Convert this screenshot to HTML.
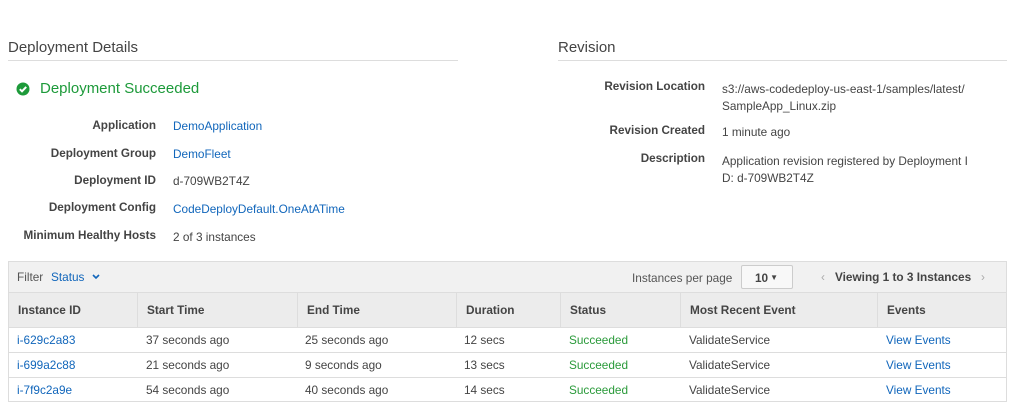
<!DOCTYPE html><html><head><style>
*{margin:0;padding:0;box-sizing:border-box}
body{width:1024px;height:419px;background:#fff;font-family:"Liberation Sans",sans-serif;color:#444;position:relative;overflow:hidden;font-size:11.8px}
.a{position:absolute;white-space:nowrap}
.h{font-size:15px;color:#444}
.lbl{font-weight:bold;text-align:right;color:#444;font-size:11.7px}
.v{font-size:11.8px;color:#444}
a,.lk{color:#1166bb;text-decoration:none}
.hr{position:absolute;height:1px;background:#ddd}
.tbl{position:absolute;left:8px;top:261px;width:999px;height:141px;border:1px solid #ddd;}
.fb{position:absolute;left:0;top:0;width:997px;height:31px;background:#f1f1f1;border-bottom:1px solid #ddd}
.th{position:absolute;top:31px;height:35px;background:#ececec;border-bottom:1px solid #ddd;border-right:1px solid #ddd;font-weight:bold;padding:10px 0 0 9px;color:#444}
.td{position:absolute;height:25px;border-bottom:1px solid #ddd;padding:5px 0 0 9px;color:#444}
.td .a{top:5px}
.g{color:#2a9a3a}
</style></head><body>
<div class="a h" style="left:8px;top:39px">Deployment Details</div>
<div class="hr" style="left:8px;top:60px;width:450px"></div>
<div class="a h" style="left:558px;top:39px">Revision</div>
<div class="hr" style="left:558px;top:60px;width:449px"></div>

<svg class="a" style="left:16px;top:82px" width="14" height="14" viewBox="0 0 14 14"><circle cx="7" cy="7" r="6.5" fill="#1d9a3a"/><path d="M3.8 7.2 6 9.3 10.2 4.9" stroke="#fff" stroke-width="2" fill="none"/></svg>
<div class="a" style="left:40px;top:80px;font-size:15px;color:#1d9a3a">Deployment Succeeded</div>

<div class="a lbl" style="right:868px;top:119px">Application</div><div class="a lk" style="left:173px;top:119px">DemoApplication</div>
<div class="a lbl" style="right:868px;top:147px">Deployment Group</div><div class="a lk" style="left:173px;top:147px">DemoFleet</div>
<div class="a lbl" style="right:868px;top:174px">Deployment ID</div><div class="a v" style="left:173px;top:174px">d-709WB2T4Z</div>
<div class="a lbl" style="right:868px;top:201px">Deployment Config</div><div class="a lk" style="left:173px;top:202px">CodeDeployDefault.OneAtATime</div>
<div class="a lbl" style="right:868px;top:229px">Minimum Healthy Hosts</div><div class="a v" style="left:173px;top:230px">2 of 3 instances</div>

<div class="a lbl" style="right:319px;top:80px">Revision Location</div><div class="a v" style="left:722px;top:81px;line-height:17px">s3://aws-codedeploy-us-east-1/samples/latest/<br>SampleApp_Linux.zip</div>
<div class="a lbl" style="right:319px;top:124px">Revision Created</div><div class="a v" style="left:722px;top:125px">1 minute ago</div>
<div class="a lbl" style="right:319px;top:152px">Description</div><div class="a v" style="left:722px;top:153px;line-height:17px">Application revision registered by Deployment I<br>D: d-709WB2T4Z</div>

<div class="tbl">
<div class="fb">
<div class="a" style="left:8px;top:8px;color:#555">Filter</div>
<div class="a lk" style="left:42px;top:8px">Status</div>
<svg class="a" style="left:83px;top:12px" width="8" height="6"><path d="M1 1 4 4 7 1" stroke="#1166bb" stroke-width="1.6" fill="none"/></svg>
<div class="a" style="left:623px;top:9px;color:#555">Instances per page</div>
<div class="a" style="left:732px;top:3px;width:52px;height:24px;background:#f8f8f8;border:1px solid #ccc;border-radius:2px;font-weight:bold;padding:5px 0 0 13px">10<span style="font-size:8px;vertical-align:2px;margin-left:2px">▼</span></div>
<div class="a" style="left:812px;top:8px;color:#aaa">‹</div>
<div class="a" style="left:826px;top:8px;font-weight:bold;color:#444">Viewing 1 to 3 Instances</div>
<div class="a" style="left:972px;top:8px;color:#aaa">›</div>
</div>
<div class="th" style="left:0;width:129px">Instance ID</div>
<div class="th" style="left:129px;width:160px">Start Time</div>
<div class="th" style="left:289px;width:159px">End Time</div>
<div class="th" style="left:448px;width:104px">Duration</div>
<div class="th" style="left:552px;width:120px">Status</div>
<div class="th" style="left:672px;width:197px">Most Recent Event</div>
<div class="th" style="left:869px;width:128px;border-right:none">Events</div>

<div class="td" style="left:0;top:66px;width:997px"><span class="a lk" style="left:8px">i-629c2a83</span><span class="a" style="left:137px">37 seconds ago</span><span class="a" style="left:296px">25 seconds ago</span><span class="a" style="left:455px">12 secs</span><span class="a g" style="left:560px">Succeeded</span><span class="a" style="left:680px">ValidateService</span><span class="a lk" style="left:877px">View Events</span></div>
<div class="td" style="left:0;top:91px;width:997px"><span class="a lk" style="left:8px">i-699a2c88</span><span class="a" style="left:137px">21 seconds ago</span><span class="a" style="left:296px">9 seconds ago</span><span class="a" style="left:455px">13 secs</span><span class="a g" style="left:560px">Succeeded</span><span class="a" style="left:680px">ValidateService</span><span class="a lk" style="left:877px">View Events</span></div>
<div class="td" style="left:0;top:116px;width:997px;border-bottom:none"><span class="a lk" style="left:8px">i-7f9c2a9e</span><span class="a" style="left:137px">54 seconds ago</span><span class="a" style="left:296px">40 seconds ago</span><span class="a" style="left:455px">14 secs</span><span class="a g" style="left:560px">Succeeded</span><span class="a" style="left:680px">ValidateService</span><span class="a lk" style="left:877px">View Events</span></div>
</div>
</body></html>
